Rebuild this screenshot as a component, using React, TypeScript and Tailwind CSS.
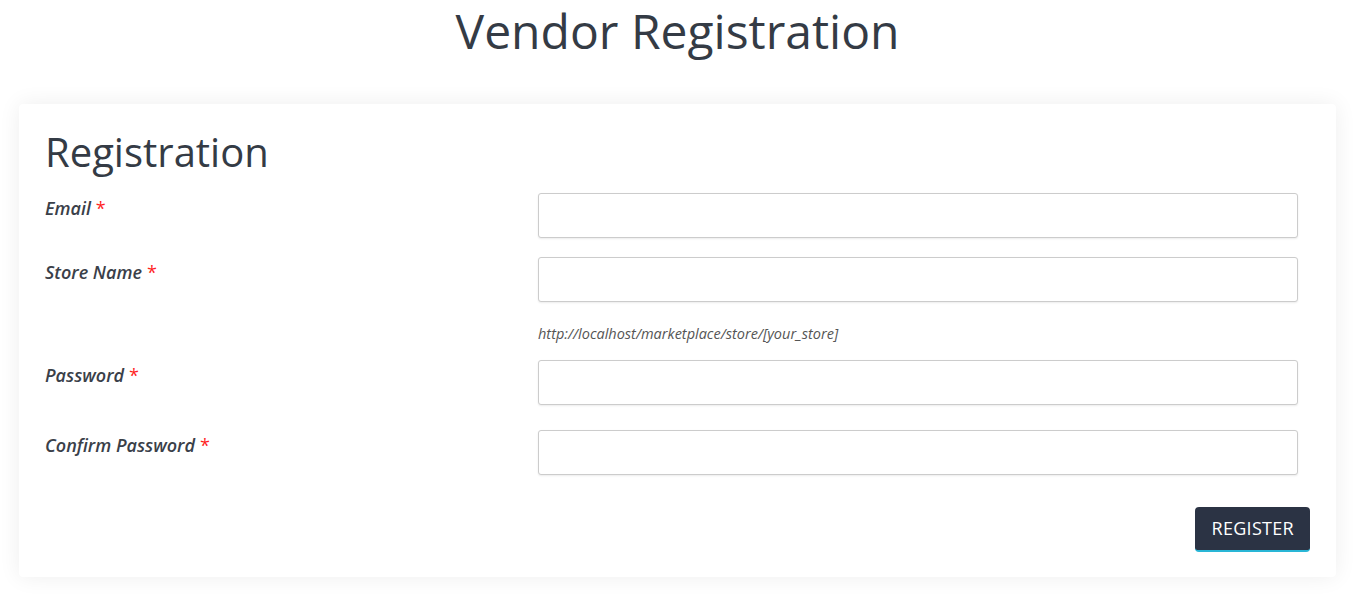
const fields = [
  { label: "Email" },
  { label: "Store Name", hint: "http://localhost/marketplace/store/[your_store]" },
  { label: "Password" },
  { label: "Confirm Password" },
];

const gaps = ["", "mt-[19px]", "mt-[16px]", "mt-[25px]"];

export default function App() {
  return (
    <div className="min-h-[596px] bg-white pl-[19px] pr-[21px] pb-[18px] font-['Open_Sans',sans-serif] text-[#343b45]">
      <h1 className="text-center text-[48px] leading-[62px] font-normal">
        Vendor Registration
      </h1>

      <div className="mt-[42px] rounded bg-white px-[26px] pt-[22px] pb-[25px] shadow-[0_0_22px_rgba(0,0,0,0.07)]">
        <h2 className="text-[40px] leading-[52px] font-normal">Registration</h2>

        <div className="mt-[15px] flex flex-col">
          {fields.map((f, i) => (
            <div key={f.label} className={gaps[i]}>
              <div className="flex">
                <label className="w-[493px] shrink-0 pt-[2px] text-[18px] leading-[26px] font-semibold italic text-[#3a4049]">
                  {f.label}
                  <span className="ml-[5px] not-italic font-normal text-[#ff1f1f]">*</span>
                </label>
                <input
                  type={f.label.includes("Password") ? "password" : "text"}
                  className="h-[45px] w-[760px] rounded-[3px] border border-[#cccccc] bg-white shadow-[0_1px_2px_rgba(0,0,0,0.08)] outline-none"
                />
              </div>
              {f.hint && (
                <div className="mt-[22px] flex">
                  <div className="w-[493px] shrink-0" />
                  <p className="text-[14.5px] leading-[20px] italic text-[#555]">{f.hint}</p>
                </div>
              )}
            </div>
          ))}
        </div>

        <div className="mt-[32px] flex justify-end">
          <button className="h-[45px] rounded-[4px] border-b-2 border-[#29b6d6] bg-[#2b3344] px-[16px] text-[18px] tracking-[0.3px] text-white">
            REGISTER
          </button>
        </div>
      </div>
    </div>
  );
}
